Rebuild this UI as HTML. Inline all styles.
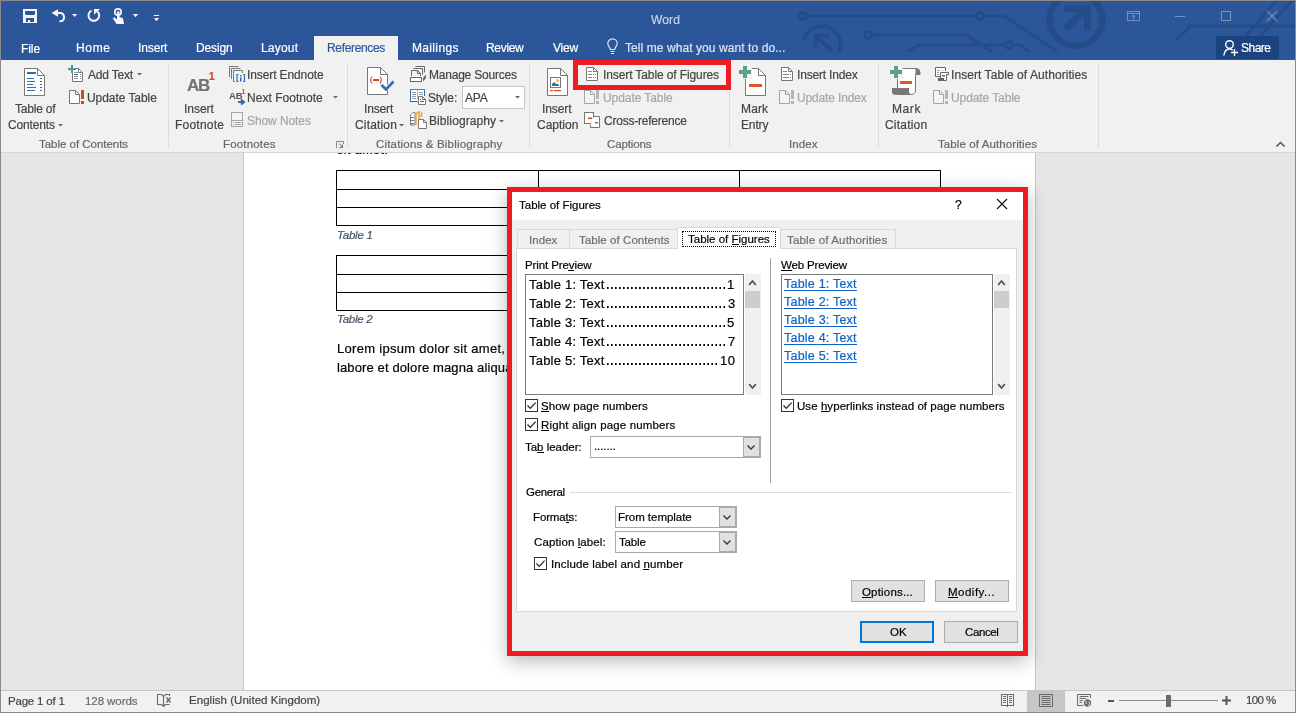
<!DOCTYPE html>
<html><head><meta charset="utf-8"><title>Word</title>
<style>
html,body{margin:0;padding:0;}
body{width:1296px;height:713px;position:relative;overflow:hidden;background:#f1f1f1;font-family:"Liberation Sans", sans-serif;}
.t{position:absolute;white-space:pre;will-change:transform;-webkit-text-stroke:0.2px currentColor;}
svg{overflow:visible}
</style></head><body>
<div style="position:absolute;left:0px;top:0px;width:1296px;height:713px;background:#8a8a8a;"></div>
<div style="position:absolute;left:1px;top:1px;width:1294px;height:59px;background:#2b579a;"></div>
<svg style="position:absolute;left:780px;top:1px;overflow:hidden" width="515" height="51" viewBox="0 0 515 51">
<g fill="none" stroke="#244c88" stroke-width="3" transform="translate(-780,-1)">
<circle cx="802.6" cy="16" r="3.5"/><path d="M806 16H977"/><circle cx="980" cy="16" r="3.5"/><path d="M983.5 16H1004L1058 52"/>
<circle cx="868.2" cy="35" r="3.5"/><path d="M872 35H967L994 53"/>
<path d="M905 53L919 45H1005"/><circle cx="1008.7" cy="45" r="3.5"/><path d="M1012 45H1020L1031 53"/>
<path d="M804 40.5A18.5 18.5 0 1 1 839 52" stroke-width="4"/>
<path d="M815.5 48V35.5H829" stroke-width="4"/><path d="M817 37L832 51" stroke-width="4"/>
<circle cx="1076" cy="19.5" r="26.4" stroke-width="6.8"/>
<path d="M1065 29L1086 9" stroke-width="7"/><path d="M1064 8.5H1087.5V30.5" stroke-width="6.8"/>
<path d="M1176 40L1191 26H1296"/>
<path d="M1245 37L1277 0M1260 37L1292 0"/>
</g></svg>
<svg style="position:absolute;left:1127px;top:11px;" width="13" height="10" viewBox="0 0 13 10"><g fill="none" stroke="#7890bb" stroke-width="1"><rect x="0.5" y="0.5" width="12" height="9"/><path d="M0.5 2.5H12.5M6.5 8.5V4M4.5 6L6.5 4L8.5 6"/></g></svg>
<svg style="position:absolute;left:1175px;top:15px;" width="10" height="2" viewBox="0 0 10 2"><path d="M0 1.5H10" stroke="#7890bb" stroke-width="1"/></svg>
<svg style="position:absolute;left:1221px;top:11px;" width="10" height="10" viewBox="0 0 10 10"><rect x="0.5" y="0.5" width="9" height="9" fill="none" stroke="#7890bb" stroke-width="1"/></svg>
<svg style="position:absolute;left:1267px;top:11px;" width="10" height="10" viewBox="0 0 10 10"><path d="M0 0L10 10M10 0L0 10" stroke="#7890bb" stroke-width="1.1"/></svg>
<div class="t" style="left:651.00px;top:14.00px;font-size:12px;line-height:12px;color:#c9d5e8;letter-spacing:0.133px;">Word</div>
<svg style="position:absolute;left:0px;top:0px;" width="200" height="30" viewBox="0 0 200 30">
<path d="M23 9H37V23H23Z" fill="#f5f5f5"/>
<path d="M25 11H35V14L34 15H26L25 14Z" fill="#2b579a"/><path d="M26 18H34V22H26Z" fill="#2b579a"/><path d="M28 20H30V22H28Z" fill="#f5f5f5"/>
<path d="M55 13H60.5A4.2 4.2 0 0 1 60.5 21.3H59.5" fill="none" stroke="#f5f5f5" stroke-width="2"/>
<path d="M51.5 13L58 9.2V16.8Z" fill="#f5f5f5"/>
<path d="M72 14H77.2L74.6 17Z" fill="#f5f5f5"/>
<path d="M91.5 10.6A5.4 5.4 0 1 0 97.5 11.5" fill="none" stroke="#f5f5f5" stroke-width="2"/>
<path d="M94 9H100L94 14.8Z" fill="#f5f5f5"/>
<circle cx="118" cy="12" r="3.2" fill="none" stroke="#f5f5f5" stroke-width="1.7"/>
<path d="M117 19.5V12.5A1.25 1.25 0 0 1 119.5 12.5V17L123 18.2L124 24H116.5L112.8 18.3L114.3 17.3L117 19.5Z" fill="#f5f5f5"/>
<path d="M132.9 14H138.2L135.55 17.2Z" fill="#f5f5f5"/>
<path d="M153.9 15H159.1V16H153.9Z" fill="#f5f5f5"/><path d="M153.9 18H159.1L156.5 21.2Z" fill="#f5f5f5"/>
</svg>
<div class="t" style="left:20.70px;top:43.00px;font-size:12px;line-height:12px;color:#ffffff;letter-spacing:-0.067px;">File</div>
<div class="t" style="left:76.10px;top:42.00px;font-size:12px;line-height:12px;color:#ffffff;letter-spacing:0.667px;">Home</div>
<div class="t" style="left:137.90px;top:42.00px;font-size:12px;line-height:12px;color:#ffffff;letter-spacing:-0.120px;">Insert</div>
<div class="t" style="left:196.00px;top:42.00px;font-size:12px;line-height:12px;color:#ffffff;letter-spacing:-0.120px;">Design</div>
<div class="t" style="left:261.30px;top:42.00px;font-size:12px;line-height:12px;color:#ffffff;letter-spacing:0.200px;">Layout</div>
<div style="position:absolute;left:314px;top:36px;width:84px;height:24px;background:#f1f1f1;"></div>
<div class="t" style="left:326.50px;top:42.00px;font-size:12px;line-height:12px;color:#2b579a;letter-spacing:-0.333px;">References</div>
<div class="t" style="left:412.30px;top:42.00px;font-size:12px;line-height:12px;color:#ffffff;letter-spacing:0.343px;">Mailings</div>
<div class="t" style="left:486.30px;top:42.00px;font-size:12px;line-height:12px;color:#ffffff;letter-spacing:-0.320px;">Review</div>
<div class="t" style="left:552.80px;top:42.00px;font-size:12px;line-height:12px;color:#ffffff;letter-spacing:-0.200px;">View</div>
<svg style="position:absolute;left:607px;top:39px;" width="11" height="15" viewBox="0 0 11 15"><g fill="none" stroke="#dfe6f1" stroke-width="1.2"><path d="M3.3 10.5C3 8 0.8 7 0.8 4.6A4.7 4.7 0 0 1 10.2 4.6C10.2 7 8 8 7.7 10.5Z"/><path d="M3.5 12.5H7.5M4 14.5H7"/></g></svg>
<div class="t" style="left:624.70px;top:42.00px;font-size:12px;line-height:12px;color:#dde4ef;letter-spacing:0.076px;">Tell me what you want to do...</div>
<div style="position:absolute;left:1216px;top:36px;width:63px;height:23px;background:#1a437f;"></div>
<svg style="position:absolute;left:1223px;top:40px;" width="15" height="16" viewBox="0 0 15 16"><g fill="none" stroke="#ffffff" stroke-width="1.4"><circle cx="6.5" cy="4.5" r="3.8"/><path d="M0.8 15.5C1.5 11 3.5 9 6.5 9C8 9 9 9.5 9.8 10"/><path d="M11.5 9V16M8 12.5H15" stroke="#1a437f" stroke-width="3"/><path d="M11.5 9V16M8 12.5H15" stroke-width="1.3"/></g></svg>
<div class="t" style="left:1241.00px;top:42.00px;font-size:12px;line-height:12px;color:#ffffff;letter-spacing:-0.500px;">Share</div>
<div style="position:absolute;left:1px;top:60px;width:1294px;height:92px;background:#f1f1f1;"></div>
<div style="position:absolute;left:1px;top:152px;width:1294px;height:1px;background:#d6d6d6;"></div>
<div style="position:absolute;left:168px;top:64px;width:1px;height:84px;background:#dcdcdc;"></div>
<div style="position:absolute;left:347px;top:64px;width:1px;height:84px;background:#dcdcdc;"></div>
<div style="position:absolute;left:529px;top:64px;width:1px;height:84px;background:#dcdcdc;"></div>
<div style="position:absolute;left:729px;top:64px;width:1px;height:84px;background:#dcdcdc;"></div>
<div style="position:absolute;left:878px;top:64px;width:1px;height:84px;background:#dcdcdc;"></div>
<div style="position:absolute;left:1098px;top:64px;width:1px;height:84px;background:#dcdcdc;"></div>
<div class="t" style="left:14.70px;top:103.00px;font-size:12px;line-height:12px;color:#444444;letter-spacing:-0.200px;">Table of</div>
<div class="t" style="left:7.60px;top:119.00px;font-size:12px;line-height:12px;color:#444444;letter-spacing:-0.143px;">Contents</div>
<div class="t" style="left:39.30px;top:139.00px;font-size:11.5px;line-height:11.5px;color:#666666;letter-spacing:-0.025px;">Table of Contents</div>
<div class="t" style="left:88.30px;top:69.00px;font-size:12px;line-height:12px;color:#444444;letter-spacing:-0.200px;">Add Text</div>
<div class="t" style="left:87.30px;top:92.00px;font-size:12px;line-height:12px;color:#444444;letter-spacing:-0.055px;">Update Table</div>
<div class="t" style="left:186.70px;top:77.00px;font-size:17px;line-height:17px;font-weight:bold;color:#737373;letter-spacing:-1.400px;">AB</div>
<div class="t" style="left:208.70px;top:72.00px;font-size:10px;line-height:10px;font-weight:bold;color:#d24726;">1</div>
<div class="t" style="left:184.20px;top:103.00px;font-size:12px;line-height:12px;color:#444444;letter-spacing:-0.040px;">Insert</div>
<div class="t" style="left:174.60px;top:119.00px;font-size:12px;line-height:12px;color:#444444;letter-spacing:0.229px;">Footnote</div>
<div class="t" style="left:247.30px;top:69.00px;font-size:12px;line-height:12px;color:#444444;letter-spacing:-0.108px;">Insert Endnote</div>
<div class="t" style="left:247.30px;top:92.00px;font-size:12px;line-height:12px;color:#444444;letter-spacing:0.033px;">Next Footnote</div>
<div class="t" style="left:247.30px;top:115.00px;font-size:12px;line-height:12px;color:#a6a6a6;letter-spacing:-0.089px;">Show Notes</div>
<div class="t" style="left:222.60px;top:139.00px;font-size:11.5px;line-height:11.5px;color:#666666;letter-spacing:0.175px;">Footnotes</div>
<div class="t" style="left:364.20px;top:103.00px;font-size:12px;line-height:12px;color:#444444;letter-spacing:-0.160px;">Insert</div>
<div class="t" style="left:354.50px;top:119.00px;font-size:12px;line-height:12px;color:#444444;letter-spacing:0.171px;">Citation</div>
<div class="t" style="left:428.70px;top:69.00px;font-size:12px;line-height:12px;color:#444444;letter-spacing:-0.215px;">Manage Sources</div>
<div class="t" style="left:428.30px;top:92.00px;font-size:12px;line-height:12px;color:#444444;letter-spacing:-0.160px;">Style:</div>
<div style="position:absolute;left:462px;top:86px;width:63px;height:23px;background:#c6c6c6;"></div>
<div style="position:absolute;left:463px;top:87px;width:61px;height:21px;background:#ffffff;"></div>
<div class="t" style="left:465.20px;top:92.00px;font-size:12px;line-height:12px;color:#444444;letter-spacing:-0.200px;">APA</div>
<div class="t" style="left:428.70px;top:115.00px;font-size:12px;line-height:12px;color:#444444;letter-spacing:0.091px;">Bibliography</div>
<div class="t" style="left:375.80px;top:139.00px;font-size:11.5px;line-height:11.5px;color:#666666;letter-spacing:0.183px;">Citations &amp; Bibliography</div>
<div class="t" style="left:542.20px;top:103.00px;font-size:12px;line-height:12px;color:#444444;letter-spacing:-0.080px;">Insert</div>
<div class="t" style="left:536.60px;top:119.00px;font-size:12px;line-height:12px;color:#444444;">Caption</div>
<div style="position:absolute;left:573px;top:60px;width:158px;height:30px;background:#ed1c24;"></div>
<div style="position:absolute;left:578px;top:65px;width:148px;height:20px;background:#f1f1f1;"></div>
<div class="t" style="left:602.60px;top:69.00px;font-size:12px;line-height:12px;color:#444444;letter-spacing:-0.109px;">Insert Table of Figures</div>
<div class="t" style="left:602.60px;top:92.00px;font-size:12px;line-height:12px;color:#a6a6a6;letter-spacing:-0.073px;">Update Table</div>
<div class="t" style="left:603.60px;top:115.00px;font-size:12px;line-height:12px;color:#444444;letter-spacing:-0.229px;">Cross-reference</div>
<div class="t" style="left:606.80px;top:139.00px;font-size:11.5px;line-height:11.5px;color:#666666;letter-spacing:-0.114px;">Captions</div>
<div class="t" style="left:740.70px;top:103.00px;font-size:12px;line-height:12px;color:#444444;letter-spacing:0.133px;">Mark</div>
<div class="t" style="left:740.70px;top:119.00px;font-size:12px;line-height:12px;color:#444444;letter-spacing:-0.150px;">Entry</div>
<div class="t" style="left:797.30px;top:69.00px;font-size:12px;line-height:12px;color:#444444;letter-spacing:-0.182px;">Insert Index</div>
<div class="t" style="left:797.30px;top:92.00px;font-size:12px;line-height:12px;color:#a6a6a6;letter-spacing:-0.145px;">Update Index</div>
<div class="t" style="left:789.30px;top:139.00px;font-size:11.5px;line-height:11.5px;color:#666666;letter-spacing:0.100px;">Index</div>
<div class="t" style="left:892.20px;top:103.00px;font-size:12px;line-height:12px;color:#444444;letter-spacing:0.600px;">Mark</div>
<div class="t" style="left:885.40px;top:119.00px;font-size:12px;line-height:12px;color:#444444;letter-spacing:0.200px;">Citation</div>
<div class="t" style="left:951.30px;top:69.00px;font-size:12px;line-height:12px;color:#444444;letter-spacing:0.069px;">Insert Table of Authorities</div>
<div class="t" style="left:951.30px;top:92.00px;font-size:12px;line-height:12px;color:#a6a6a6;letter-spacing:-0.091px;">Update Table</div>
<div class="t" style="left:938.40px;top:139.00px;font-size:11.5px;line-height:11.5px;color:#666666;letter-spacing:0.095px;">Table of Authorities</div>
<svg style="position:absolute;left:1276px;top:141px;" width="9" height="6" viewBox="0 0 9 6"><path d="M0.5 5.5L4.5 1.5L8.5 5.5" fill="none" stroke="#555" stroke-width="1.5"/></svg>
<div style="position:absolute;left:1px;top:153px;width:1294px;height:537px;background:#e6e6e6;"></div>
<div style="position:absolute;left:243px;top:153px;width:793px;height:537px;background:#c6c6c6;"></div>
<div style="position:absolute;left:244px;top:153px;width:791px;height:537px;background:#ffffff;"></div>
<div style="position:absolute;left:244px;top:153px;width:791px;height:10px;overflow:hidden"><div class="t" style="left:92.5px;top:-9px;font-size:12.5px;line-height:12.5px;color:#000;letter-spacing:0.45px">sit amet.</div></div>
<div style="position:absolute;left:336px;top:170px;width:605px;height:56px;background:#000;"></div>
<div style="position:absolute;left:337px;top:171px;width:201px;height:18px;background:#fff;"></div>
<div style="position:absolute;left:539px;top:171px;width:200px;height:18px;background:#fff;"></div>
<div style="position:absolute;left:740px;top:171px;width:200px;height:18px;background:#fff;"></div>
<div style="position:absolute;left:337px;top:190px;width:201px;height:17px;background:#fff;"></div>
<div style="position:absolute;left:539px;top:190px;width:200px;height:17px;background:#fff;"></div>
<div style="position:absolute;left:740px;top:190px;width:200px;height:17px;background:#fff;"></div>
<div style="position:absolute;left:337px;top:208px;width:201px;height:17px;background:#fff;"></div>
<div style="position:absolute;left:539px;top:208px;width:200px;height:17px;background:#fff;"></div>
<div style="position:absolute;left:740px;top:208px;width:200px;height:17px;background:#fff;"></div>
<div class="t" style="left:336.90px;top:230.00px;font-size:11.5px;line-height:11.5px;font-style:italic;color:#44546a;letter-spacing:-0.233px;">Table 1</div>
<div style="position:absolute;left:336px;top:255px;width:605px;height:56px;background:#000;"></div>
<div style="position:absolute;left:337px;top:256px;width:201px;height:18px;background:#fff;"></div>
<div style="position:absolute;left:539px;top:256px;width:200px;height:18px;background:#fff;"></div>
<div style="position:absolute;left:740px;top:256px;width:200px;height:18px;background:#fff;"></div>
<div style="position:absolute;left:337px;top:275px;width:201px;height:17px;background:#fff;"></div>
<div style="position:absolute;left:539px;top:275px;width:200px;height:17px;background:#fff;"></div>
<div style="position:absolute;left:740px;top:275px;width:200px;height:17px;background:#fff;"></div>
<div style="position:absolute;left:337px;top:293px;width:201px;height:17px;background:#fff;"></div>
<div style="position:absolute;left:539px;top:293px;width:200px;height:17px;background:#fff;"></div>
<div style="position:absolute;left:740px;top:293px;width:200px;height:17px;background:#fff;"></div>
<div class="t" style="left:336.80px;top:314.00px;font-size:11.5px;line-height:11.5px;font-style:italic;color:#44546a;letter-spacing:-0.267px;">Table 2</div>
<div class="t" style="left:336.70px;top:342.00px;font-size:13px;line-height:13px;color:#000;letter-spacing:0.290px;">Lorem ipsum dolor sit amet, consectetur adipiscing elit, sed do eiusmod tempor</div>
<div class="t" style="left:336.70px;top:361.00px;font-size:13px;line-height:13px;color:#000;letter-spacing:0.120px;">labore et dolore magna aliqua. Ut enim ad minim veniam, quis nostrud</div>
<div style="position:absolute;left:1px;top:690px;width:1294px;height:1px;background:#c6c6c6;"></div>
<div style="position:absolute;left:1px;top:691px;width:1294px;height:21px;background:#f1f1f1;"></div>
<div class="t" style="left:7.50px;top:696.00px;font-size:11.5px;line-height:11.5px;color:#444444;letter-spacing:-0.200px;">Page 1 of 1</div>
<div class="t" style="left:84.60px;top:696.00px;font-size:11.5px;line-height:11.5px;color:#6a6a6a;letter-spacing:-0.075px;">128 words</div>
<div class="t" style="left:188.60px;top:695.00px;font-size:11.5px;line-height:11.5px;color:#444444;letter-spacing:0.035px;">English (United Kingdom)</div>
<div style="position:absolute;left:1027px;top:691px;width:38px;height:21px;background:#c6c6c6;"></div>
<div class="t" style="left:1245.90px;top:695.00px;font-size:11.5px;line-height:11.5px;color:#444444;letter-spacing:-0.600px;">100 %</div>
<div style="position:absolute;left:1119px;top:700px;width:99px;height:1px;background:#8f8f8f;"></div>
<div style="position:absolute;left:1166px;top:695px;width:5px;height:12px;background:#6b6b6b;"></div>
<div style="position:absolute;left:1108px;top:700px;width:6px;height:2px;background:#555;"></div>
<svg style="position:absolute;left:1222px;top:696px;" width="9" height="9" viewBox="0 0 9 9"><path d="M4.5 0V9M0 4.5H9" stroke="#555" stroke-width="2"/></svg>
<div style="position:absolute;left:507px;top:187px;width:521px;height:469px;box-shadow:0 5px 18px rgba(0,0,0,0.28)"></div>
<div style="position:absolute;left:507px;top:187px;width:521px;height:469px;background:#ed1c24;"></div>
<div style="position:absolute;left:512px;top:192px;width:511px;height:459px;background:#f0f0f0;"></div>
<div style="position:absolute;left:512px;top:192px;width:511px;height:28px;background:#ffffff;"></div>
<div class="t" style="left:518.90px;top:200.00px;font-size:11.5px;line-height:11.5px;color:#000;">Table of Figures</div>
<div class="t" style="left:954.70px;top:199.00px;font-size:12px;line-height:12px;color:#000;">?</div>
<svg style="position:absolute;left:997px;top:199px;" width="10" height="10" viewBox="0 0 10 10"><path d="M0 0L10 10M10 0L0 10" stroke="#111" stroke-width="1.1"/></svg>
<div style="position:absolute;left:517px;top:229px;width:52px;height:20px;background:#d9d9d9;"></div>
<div style="position:absolute;left:518px;top:230px;width:51px;height:19px;background:#f0f0f0;"></div>
<div style="position:absolute;left:569px;top:229px;width:109px;height:20px;background:#d9d9d9;"></div>
<div style="position:absolute;left:570px;top:230px;width:107px;height:19px;background:#f0f0f0;"></div>
<div style="position:absolute;left:780px;top:229px;width:116px;height:20px;background:#d9d9d9;"></div>
<div style="position:absolute;left:781px;top:230px;width:114px;height:19px;background:#f0f0f0;"></div>
<div style="position:absolute;left:516px;top:248px;width:501px;height:364px;background:#d9d9d9;"></div>
<div style="position:absolute;left:517px;top:249px;width:499px;height:362px;background:#ffffff;"></div>
<div style="position:absolute;left:677px;top:227px;width:104px;height:22px;background:#d9d9d9;"></div>
<div style="position:absolute;left:678px;top:228px;width:102px;height:22px;background:#ffffff;"></div>
<div style="position:absolute;left:682px;top:231px;width:92px;height:14px;border:1px dotted #000"></div>
<div class="t" style="left:529.20px;top:235.00px;font-size:11.5px;line-height:11.5px;color:#6d6d6d;letter-spacing:0.050px;">Index</div>
<div class="t" style="left:578.80px;top:235.00px;font-size:11.5px;line-height:11.5px;color:#6d6d6d;letter-spacing:0.062px;">Table of Contents</div>
<div class="t" style="left:688.10px;top:234.00px;font-size:11.5px;line-height:11.5px;color:#000;">Table of Figures</div>
<div style="position:absolute;left:731.6px;top:244px;width:7.0px;height:1px;background:#000"></div>
<div class="t" style="left:787.00px;top:235.00px;font-size:11.5px;line-height:11.5px;color:#6d6d6d;letter-spacing:0.158px;">Table of Authorities</div>
<div class="t" style="left:524.50px;top:260.00px;font-size:11.5px;line-height:11.5px;color:#000;letter-spacing:-0.100px;">Print Preview</div>
<div style="position:absolute;left:568.3px;top:270px;width:5.7px;height:1px;background:#000"></div>
<div style="position:absolute;left:525px;top:274px;width:219px;height:121px;background:#7a7a7a;"></div>
<div style="position:absolute;left:526px;top:275px;width:217px;height:119px;background:#ffffff;"></div>
<div style="position:absolute;left:745px;top:274px;width:16px;height:121px;background:#f0f0f0;"></div>
<div style="position:absolute;left:745px;top:291px;width:15px;height:17px;background:#cdcdcd;"></div>
<svg style="position:absolute;left:748px;top:279px;" width="9" height="7" viewBox="0 0 9 7"><path d="M1.2 5.8L4.5 2L7.8 5.8" fill="none" stroke="#555" stroke-width="1.8"/></svg>
<svg style="position:absolute;left:748px;top:383px;" width="9" height="7" viewBox="0 0 9 7"><path d="M1.2 1.2L4.5 5L7.8 1.2" fill="none" stroke="#555" stroke-width="1.8"/></svg>
<div class="t" style="left:528.80px;top:278.00px;font-size:13px;line-height:13px;color:#000;letter-spacing:0.217px;">Table 1: Text</div>
<div class="t" style="left:726.80px;top:278.00px;font-size:13px;line-height:13px;color:#000;">1</div>
<div style="position:absolute;left:607px;top:287px;width:118px;height:2px;background-image:linear-gradient(90deg,#000 0 2px,transparent 2px);background-size:4.03px 2px"></div>
<div class="t" style="left:528.80px;top:297.00px;font-size:13px;line-height:13px;color:#000;letter-spacing:0.217px;">Table 2: Text</div>
<div class="t" style="left:727.80px;top:297.00px;font-size:13px;line-height:13px;color:#000;">3</div>
<div style="position:absolute;left:607px;top:306px;width:118px;height:2px;background-image:linear-gradient(90deg,#000 0 2px,transparent 2px);background-size:4.03px 2px"></div>
<div class="t" style="left:528.80px;top:316.00px;font-size:13px;line-height:13px;color:#000;letter-spacing:0.217px;">Table 3: Text</div>
<div class="t" style="left:726.80px;top:316.00px;font-size:13px;line-height:13px;color:#000;">5</div>
<div style="position:absolute;left:607px;top:325px;width:118px;height:2px;background-image:linear-gradient(90deg,#000 0 2px,transparent 2px);background-size:4.03px 2px"></div>
<div class="t" style="left:528.80px;top:335.00px;font-size:13px;line-height:13px;color:#000;letter-spacing:0.217px;">Table 4: Text</div>
<div class="t" style="left:727.80px;top:335.00px;font-size:13px;line-height:13px;color:#000;">7</div>
<div style="position:absolute;left:607px;top:344px;width:118px;height:2px;background-image:linear-gradient(90deg,#000 0 2px,transparent 2px);background-size:4.03px 2px"></div>
<div class="t" style="left:528.80px;top:354.00px;font-size:13px;line-height:13px;color:#000;letter-spacing:0.217px;">Table 5: Text</div>
<div class="t" style="left:719.70px;top:354.00px;font-size:13px;line-height:13px;color:#000;letter-spacing:0.600px;">10</div>
<div style="position:absolute;left:607px;top:363px;width:110px;height:2px;background-image:linear-gradient(90deg,#000 0 2px,transparent 2px);background-size:4.03px 2px"></div>
<div style="position:absolute;left:770px;top:258px;width:1px;height:225px;background:#a0a0a0;"></div>
<div class="t" style="left:781.00px;top:260.00px;font-size:11.5px;line-height:11.5px;color:#000;letter-spacing:-0.160px;">Web Preview</div>
<div style="position:absolute;left:781.0px;top:270px;width:10.5px;height:1px;background:#000"></div>
<div style="position:absolute;left:781px;top:274px;width:212px;height:121px;background:#7a7a7a;"></div>
<div style="position:absolute;left:782px;top:275px;width:210px;height:119px;background:#ffffff;"></div>
<div style="position:absolute;left:994px;top:274px;width:16px;height:121px;background:#f0f0f0;"></div>
<div style="position:absolute;left:994px;top:291px;width:15px;height:17px;background:#cdcdcd;"></div>
<svg style="position:absolute;left:997px;top:279px;" width="9" height="7" viewBox="0 0 9 7"><path d="M1.2 5.8L4.5 2L7.8 5.8" fill="none" stroke="#555" stroke-width="1.8"/></svg>
<svg style="position:absolute;left:997px;top:383px;" width="9" height="7" viewBox="0 0 9 7"><path d="M1.2 1.2L4.5 5L7.8 1.2" fill="none" stroke="#555" stroke-width="1.8"/></svg>
<div class="t" style="left:784.00px;top:278.00px;font-size:12.5px;line-height:12.5px;color:#0f62c0;letter-spacing:0.217px;">Table 1: Text</div>
<div style="position:absolute;left:784px;top:290px;width:73px;height:1px;background:#0f62c0;"></div>
<div class="t" style="left:784.00px;top:296.00px;font-size:12.5px;line-height:12.5px;color:#0f62c0;letter-spacing:0.217px;">Table 2: Text</div>
<div style="position:absolute;left:784px;top:308px;width:73px;height:1px;background:#0f62c0;"></div>
<div class="t" style="left:784.00px;top:314.00px;font-size:12.5px;line-height:12.5px;color:#0f62c0;letter-spacing:0.217px;">Table 3: Text</div>
<div style="position:absolute;left:784px;top:326px;width:73px;height:1px;background:#0f62c0;"></div>
<div class="t" style="left:784.00px;top:332.00px;font-size:12.5px;line-height:12.5px;color:#0f62c0;letter-spacing:0.217px;">Table 4: Text</div>
<div style="position:absolute;left:784px;top:344px;width:73px;height:1px;background:#0f62c0;"></div>
<div class="t" style="left:784.00px;top:350.00px;font-size:12.5px;line-height:12.5px;color:#0f62c0;letter-spacing:0.217px;">Table 5: Text</div>
<div style="position:absolute;left:784px;top:362px;width:73px;height:1px;background:#0f62c0;"></div>
<div style="position:absolute;left:525px;top:399px;width:13px;height:13px;background:#333333;"></div>
<div style="position:absolute;left:526px;top:400px;width:11px;height:11px;background:#ffffff;"></div>
<svg style="position:absolute;left:527px;top:402px;" width="9" height="7" viewBox="0 0 9 7"><path d="M0.5 3.5L3.3 6.3L8.6 0.7" fill="none" stroke="#222" stroke-width="1.2"/></svg>
<div class="t" style="left:541.10px;top:401.00px;font-size:11.5px;line-height:11.5px;color:#000;letter-spacing:0.075px;">Show page numbers</div>
<div style="position:absolute;left:541.1px;top:411px;width:7.7px;height:1px;background:#000"></div>
<div style="position:absolute;left:525px;top:418px;width:13px;height:13px;background:#333333;"></div>
<div style="position:absolute;left:526px;top:419px;width:11px;height:11px;background:#ffffff;"></div>
<svg style="position:absolute;left:527px;top:421px;" width="9" height="7" viewBox="0 0 9 7"><path d="M0.5 3.5L3.3 6.3L8.6 0.7" fill="none" stroke="#222" stroke-width="1.2"/></svg>
<div class="t" style="left:541.10px;top:420.00px;font-size:11.5px;line-height:11.5px;color:#000;letter-spacing:0.139px;">Right align page numbers</div>
<div style="position:absolute;left:541.1px;top:430px;width:8.3px;height:1px;background:#000"></div>
<div style="position:absolute;left:781px;top:399px;width:13px;height:13px;background:#333333;"></div>
<div style="position:absolute;left:782px;top:400px;width:11px;height:11px;background:#ffffff;"></div>
<svg style="position:absolute;left:783px;top:402px;" width="9" height="7" viewBox="0 0 9 7"><path d="M0.5 3.5L3.3 6.3L8.6 0.7" fill="none" stroke="#222" stroke-width="1.2"/></svg>
<div class="t" style="left:797.40px;top:401.00px;font-size:11.5px;line-height:11.5px;color:#000;letter-spacing:0.065px;">Use hyperlinks instead of page numbers</div>
<div style="position:absolute;left:821.3px;top:411px;width:6.4px;height:1px;background:#000"></div>
<div class="t" style="left:525.30px;top:442.00px;font-size:11.5px;line-height:11.5px;color:#000;letter-spacing:-0.020px;">Tab leader:</div>
<div style="position:absolute;left:537.4px;top:452px;width:6.4px;height:1px;background:#000"></div>
<div style="position:absolute;left:590px;top:436px;width:171px;height:22px;background:#a8a8ae;"></div>
<div style="position:absolute;left:591px;top:437px;width:169px;height:20px;background:#ffffff;"></div>
<div style="position:absolute;left:743px;top:437px;width:17px;height:20px;background:#a8a8ae;"></div>
<div style="position:absolute;left:744px;top:438px;width:15px;height:18px;background:#e1e1e1;"></div>
<svg style="position:absolute;left:747px;top:445px;" width="8" height="5" viewBox="0 0 8 5"><path d="M0.5 0.5L4 4L7.5 0.5" fill="none" stroke="#333" stroke-width="1.3"/></svg>
<div class="t" style="left:593.80px;top:441.00px;font-size:11.5px;line-height:11.5px;color:#000;letter-spacing:-0.100px;">.......</div>
<div class="t" style="left:525.70px;top:487.00px;font-size:11.5px;line-height:11.5px;color:#000;letter-spacing:-0.300px;">General</div>
<div style="position:absolute;left:570px;top:492px;width:441px;height:1px;background:#dcdcdc;"></div>
<div class="t" style="left:533.40px;top:512.00px;font-size:11.5px;line-height:11.5px;color:#000;letter-spacing:-0.143px;">Formats:</div>
<div style="position:absolute;left:565.9px;top:522px;width:3.1px;height:1px;background:#000"></div>
<div style="position:absolute;left:615px;top:506px;width:122px;height:22px;background:#a8a8ae;"></div>
<div style="position:absolute;left:616px;top:507px;width:120px;height:20px;background:#ffffff;"></div>
<div style="position:absolute;left:719px;top:507px;width:17px;height:20px;background:#a8a8ae;"></div>
<div style="position:absolute;left:720px;top:508px;width:15px;height:18px;background:#e1e1e1;"></div>
<svg style="position:absolute;left:723px;top:515px;" width="8" height="5" viewBox="0 0 8 5"><path d="M0.5 0.5L4 4L7.5 0.5" fill="none" stroke="#333" stroke-width="1.3"/></svg>
<div class="t" style="left:618.40px;top:512.00px;font-size:11.5px;line-height:11.5px;color:#000;letter-spacing:-0.033px;">From template</div>
<div class="t" style="left:534.40px;top:537.00px;font-size:11.5px;line-height:11.5px;color:#000;letter-spacing:0.108px;">Caption label:</div>
<div style="position:absolute;left:578.1px;top:547px;width:3.0px;height:1px;background:#000"></div>
<div style="position:absolute;left:615px;top:531px;width:122px;height:22px;background:#a8a8ae;"></div>
<div style="position:absolute;left:616px;top:532px;width:120px;height:20px;background:#ffffff;"></div>
<div style="position:absolute;left:719px;top:532px;width:17px;height:20px;background:#a8a8ae;"></div>
<div style="position:absolute;left:720px;top:533px;width:15px;height:18px;background:#e1e1e1;"></div>
<svg style="position:absolute;left:723px;top:540px;" width="8" height="5" viewBox="0 0 8 5"><path d="M0.5 0.5L4 4L7.5 0.5" fill="none" stroke="#333" stroke-width="1.3"/></svg>
<div class="t" style="left:619.40px;top:537.00px;font-size:11.5px;line-height:11.5px;color:#000;letter-spacing:-0.150px;">Table</div>
<div style="position:absolute;left:534px;top:557px;width:13px;height:13px;background:#333333;"></div>
<div style="position:absolute;left:535px;top:558px;width:11px;height:11px;background:#ffffff;"></div>
<svg style="position:absolute;left:536px;top:560px;" width="9" height="7" viewBox="0 0 9 7"><path d="M0.5 3.5L3.3 6.3L8.6 0.7" fill="none" stroke="#222" stroke-width="1.2"/></svg>
<div class="t" style="left:550.50px;top:559.00px;font-size:11.5px;line-height:11.5px;color:#000;letter-spacing:0.130px;">Include label and number</div>
<div style="position:absolute;left:643.0px;top:569px;width:6.4px;height:1px;background:#000"></div>
<div style="position:absolute;left:851px;top:580px;width:74px;height:22px;background:#adadad;"></div>
<div style="position:absolute;left:852px;top:581px;width:72px;height:20px;background:#e1e1e1;"></div>
<div class="t" style="left:862.30px;top:587.00px;font-size:11.5px;line-height:11.5px;color:#000;letter-spacing:0.178px;">Options...</div>
<div style="position:absolute;left:862.3px;top:597px;width:8.9px;height:1px;background:#000"></div>
<div style="position:absolute;left:935px;top:580px;width:74px;height:22px;background:#adadad;"></div>
<div style="position:absolute;left:936px;top:581px;width:72px;height:20px;background:#e1e1e1;"></div>
<div class="t" style="left:948.20px;top:587.00px;font-size:11.5px;line-height:11.5px;color:#000;letter-spacing:0.500px;">Modify...</div>
<div style="position:absolute;left:948.2px;top:597px;width:9.6px;height:1px;background:#000"></div>
<div style="position:absolute;left:860px;top:621px;width:74px;height:22px;background:#0078d7;"></div>
<div style="position:absolute;left:862px;top:623px;width:70px;height:18px;background:#e1e1e1;"></div>
<div class="t" style="left:889.60px;top:627.00px;font-size:11.5px;line-height:11.5px;color:#000;">OK</div>
<div style="position:absolute;left:944px;top:621px;width:74px;height:22px;background:#adadad;"></div>
<div style="position:absolute;left:945px;top:622px;width:72px;height:20px;background:#e1e1e1;"></div>
<div class="t" style="left:964.60px;top:627.00px;font-size:11.5px;line-height:11.5px;color:#000;letter-spacing:-0.400px;">Cancel</div>
<svg style="position:absolute;left:0px;top:0px;" width="1296" height="160" viewBox="0 0 1296 160"><path d="M24.5 68.5H37.5L44.5 75.5V95.5H24.5Z" fill="#fff" stroke="#767676"/><path d="M37.5 68.5V75.5H44.5" fill="none" stroke="#767676"/><rect x="27" y="72" width="9" height="2" fill="#2e6db4"/><rect x="27" y="78" width="7" height="1" fill="#2e6db4"/><rect x="40" y="78" width="2" height="1" fill="#2e6db4"/><rect x="27" y="81" width="8" height="1" fill="#2e6db4"/><rect x="40" y="81" width="2" height="1" fill="#2e6db4"/><rect x="27" y="84" width="6" height="1" fill="#2e6db4"/><rect x="40" y="84" width="2" height="1" fill="#2e6db4"/><rect x="27" y="87" width="9" height="1" fill="#2e6db4"/><rect x="40" y="87" width="2" height="1" fill="#2e6db4"/><rect x="27" y="90" width="8" height="1" fill="#2e6db4"/><rect x="40" y="90" width="2" height="1" fill="#2e6db4"/><path d="M72.5 68.5H78.5L82.5 72.5V81.5H72.5Z" fill="#fff" stroke="#767676"/><path d="M78.5 68.5V72.5H82.5" fill="none" stroke="#767676"/><rect x="74" y="72" width="4" height="1" fill="#999"/><rect x="74" y="74" width="4" height="1" fill="#2e6db4"/><rect x="80" y="74" width="1" height="1" fill="#2e6db4"/><rect x="74" y="76" width="4" height="1" fill="#999"/><rect x="80" y="76" width="1" height="1" fill="#999"/><rect x="74" y="78" width="4" height="1" fill="#999"/><rect x="80" y="78" width="1" height="1" fill="#999"/><rect x="68" y="66" width="7" height="6" fill="#f1f1f1"/><rect x="71" y="65" width="2" height="8" fill="#4f9c82"/><rect x="68" y="68" width="8" height="2" fill="#4f9c82"/><path d="M69.5 90.5H75.5L79.5 94.5V103.5H69.5Z" fill="#fff" stroke="#767676"/><path d="M75.5 90.5V94.5H79.5" fill="none" stroke="#767676"/><rect x="81" y="90" width="3" height="9" fill="#d24726"/><rect x="81" y="101" width="3" height="3" fill="#d24726"/><path d="M229.5 77V66.5H238.5M231.5 79V68.5H240.5M235 81.5H233.5V70.5H242.5V73" fill="none" stroke="#767676"/><path d="M238.5 74.5H237V81.5H238.5M243 74.5H244.5V81.5H243" fill="none" stroke="#2e6db4" stroke-width="1.2"/><rect x="240" y="75" width="1.5" height="1.5" fill="#2e6db4"/><rect x="240" y="77.5" width="1.5" height="4" fill="#2e6db4"/><text x="229" y="99" font-family="Liberation Sans" font-weight="bold" font-size="9.5" fill="#555">AB</text><text x="241.5" y="94" font-family="Liberation Sans" font-weight="bold" font-size="7" fill="#d24726">1</text><path d="M238 102H243.5M241 99.5L244 102L241 104.5" fill="none" stroke="#2e6db4" stroke-width="2"/><rect x="231.5" y="112.5" width="11" height="14" fill="#f6f2f6" stroke="#a6a6a6"/><path d="M231.5 120.5H242.5" stroke="#a6a6a6"/><rect x="233" y="122" width="1" height="1" fill="#a6a6a6"/><rect x="233" y="124" width="1" height="1" fill="#a6a6a6"/><rect x="235" y="122" width="6" height="1" fill="#a6a6a6"/><rect x="235" y="124" width="6" height="1" fill="#a6a6a6"/><path d="M367.5 67.5H380.5L387.5 74.5V94.5H367.5Z" fill="#fff" stroke="#767676"/><path d="M380.5 67.5V74.5H387.5" fill="none" stroke="#767676"/><path d="M372 76.5Q369.5 80 372 83.5M380 76.5Q382.5 80 380 83.5" fill="none" stroke="#d24726" stroke-width="1.1"/><rect x="373" y="79" width="6" height="2" fill="#d24726"/><path d="M381 84L386 89L395 80" fill="none" stroke="#f1f1f1" stroke-width="4"/><path d="M381.5 85L386 89.5L393.5 81.5" fill="none" stroke="#2e6db4" stroke-width="2.6"/><path d="M415.5 66.5H424.5V72.5M413.5 68.5H422.5V74.5M411.5 76V70.5H417.5L420.5 73.5V76" fill="none" stroke="#666"/><path d="M417.5 70.5V73.5H420.5" fill="none" stroke="#666"/><rect x="410.5" y="77.5" width="11" height="4" fill="#fff" stroke="#666"/><path d="M423 81.5L426 78V74.5L423 78Z" fill="#666"/><rect x="410" y="89" width="15" height="13" fill="#fff"/><path d="M410.5 102V89.5H424.5V96M410.5 101.5H417.5" fill="none" stroke="#2e6db4"/><path d="M410.5 89.5H424.5" stroke="#777"/><path d="M417.5 90V99" stroke="#bbb"/><rect x="412" y="92" width="4" height="1" fill="#999"/><rect x="412" y="94" width="4" height="1" fill="#999"/><rect x="412" y="96" width="4" height="1" fill="#999"/><rect x="412" y="98" width="4" height="1" fill="#999"/><rect x="419" y="92" width="4" height="1" fill="#999"/><rect x="419" y="94" width="4" height="1" fill="#999"/><path d="M418.5 96.5H422.5L425.5 99.5V104.5H418.5Z" fill="#fff" stroke="#767676"/><path d="M422.5 96.5V99.5H425.5" fill="none" stroke="#767676"/><rect x="420" y="99" width="1" height="1" fill="#2e6db4"/><rect x="420" y="101" width="4" height="1" fill="#2e6db4"/><path d="M410.5 125V115L413 112.5H415V125Z" fill="#fff" stroke="#777"/><path d="M411 117.5H414M411 120.5H414M411 123.5H414" stroke="#777"/><path d="M416 125V114L419 112V120" fill="none" stroke="#e9a53f" stroke-width="1.5"/><path d="M421.5 112V117" stroke="#e9a53f" stroke-width="1.5"/><path d="M419 116H422" stroke="#e9a53f"/><path d="M418.5 119.5H423.5L426.5 122.5V128.5H418.5Z" fill="#fff" stroke="#767676"/><path d="M423.5 119.5V122.5H426.5" fill="none" stroke="#767676"/><path d="M547.5 68.5H560.5L567.5 75.5V95.5H547.5Z" fill="#fff" stroke="#767676"/><path d="M560.5 68.5V75.5H567.5" fill="none" stroke="#767676"/><rect x="550.5" y="77.5" width="10" height="10" fill="#fff" stroke="#767676"/><circle cx="557.5" cy="80.5" r="1.5" fill="#eab155"/><path d="M552 86V84L554 82L556 84L557 83.5L559 85V86Z" fill="#2e6db4"/><rect x="550" y="90" width="3" height="1.2" fill="#d24726"/><rect x="554" y="90" width="7" height="1.2" fill="#d24726"/><path d="M586.5 67.5H593.5L597.5 71.5V80.5H586.5Z" fill="#fff" stroke="#767676"/><path d="M593.5 67.5V71.5H597.5" fill="none" stroke="#767676"/><rect x="588" y="71" width="4" height="1" fill="#888"/><rect x="593" y="71" width="1" height="1" fill="#888"/><rect x="595" y="71" width="1" height="1" fill="#888"/><rect x="588" y="74" width="4" height="1" fill="#888"/><rect x="593" y="74" width="1" height="1" fill="#888"/><rect x="595" y="74" width="1" height="1" fill="#888"/><rect x="588" y="77" width="4" height="1" fill="#888"/><rect x="593" y="77" width="1" height="1" fill="#888"/><rect x="595" y="77" width="1" height="1" fill="#888"/><path d="M584.5 90.5H590.5L594.5 94.5V103.5H584.5Z" fill="#f6f2f6" stroke="#a6a6a6"/><path d="M590.5 90.5V94.5H594.5" fill="none" stroke="#a6a6a6"/><rect x="596" y="90" width="3" height="9" fill="#b4b4b4"/><rect x="596" y="101" width="3" height="3" fill="#b4b4b4"/><rect x="584.5" y="112.5" width="9" height="11" fill="#fff" stroke="#767676"/><rect x="588" y="117.5" width="4" height="1.6" fill="#d24726"/><path d="M594 116.5H599.5V127.5H590.5V125" fill="#fff" stroke="#767676"/><rect x="595" y="122" width="3" height="1.4" fill="#d24726"/><path d="M745.5 68.5H758.5L765.5 75.5V95.5H745.5Z" fill="#fff" stroke="#767676"/><path d="M758.5 68.5V75.5H765.5" fill="none" stroke="#767676"/><rect x="738" y="65" width="14" height="14" fill="#f1f1f1"/><rect x="743" y="66" width="4" height="12" fill="#5aa08a"/><rect x="739" y="70" width="12" height="4" fill="#5aa08a"/><rect x="749" y="84" width="13" height="3" fill="#d9572f"/><path d="M781.5 67.5H788.5L792.5 71.5V80.5H781.5Z" fill="#fff" stroke="#767676"/><path d="M788.5 67.5V71.5H792.5" fill="none" stroke="#767676"/><rect x="783" y="71" width="4" height="1" fill="#888"/><rect x="783" y="74" width="6" height="1" fill="#888"/><rect x="790" y="74" width="1" height="1" fill="#888"/><rect x="783" y="77" width="6" height="1" fill="#888"/><rect x="790" y="77" width="1" height="1" fill="#888"/><path d="M779.5 90.5H785.5L789.5 94.5V103.5H779.5Z" fill="#f6f2f6" stroke="#a6a6a6"/><path d="M785.5 90.5V94.5H789.5" fill="none" stroke="#a6a6a6"/><rect x="791" y="90" width="3" height="9" fill="#b4b4b4"/><rect x="791" y="101" width="3" height="3" fill="#b4b4b4"/><path d="M897.5 94V68.5H916A4 4 0 0 1 920 72.5V74.5H915.5V90A4 4 0 0 1 911.5 94.5H897.5Z" fill="#fff" stroke="#777"/><path d="M915.5 68.5H916A4 4 0 0 1 920 72.5V74.5H915.5Z" fill="#777"/><path d="M892 88H909V91A3.5 3.5 0 0 0 912.5 94.7H895A3 3 0 0 1 892 91.7Z" fill="#777"/><rect x="889" y="65" width="14" height="14" fill="#f1f1f1"/><rect x="894" y="66" width="4" height="12" fill="#5aa08a"/><rect x="890" y="70" width="12" height="4" fill="#5aa08a"/><rect x="900" y="81" width="12" height="3" fill="#d9572f"/><path d="M940.5 76.5H935.5V67.5H945.5V71" fill="#fff" stroke="#666"/><rect x="937" y="70" width="3" height="1" fill="#999"/><rect x="942" y="70" width="1" height="1" fill="#999"/><rect x="937" y="72" width="2" height="1" fill="#999"/><rect x="937" y="74" width="2" height="1" fill="#999"/><path d="M940.5 79V72.5H948.5V74.5H946.5V80.5H940.5Z" fill="#fff" stroke="#666"/><rect x="942" y="75" width="3" height="1.5" fill="#d24726"/><rect x="938" y="78" width="6" height="3" fill="#666"/><path d="M933.5 90.5H939.5L943.5 94.5V103.5H933.5Z" fill="#f6f2f6" stroke="#a6a6a6"/><path d="M939.5 90.5V94.5H943.5" fill="none" stroke="#a6a6a6"/><rect x="945" y="90" width="3" height="9" fill="#b4b4b4"/><rect x="945" y="101" width="3" height="3" fill="#b4b4b4"/><path d="M137 73H142L139.5 75.5Z" fill="#666"/><path d="M58 124H63L60.5 126.5Z" fill="#666"/><path d="M333 96H338L335.5 98.5Z" fill="#666"/><path d="M399 124H404L401.5 126.5Z" fill="#666"/><path d="M499 120H504L501.5 122.5Z" fill="#666"/><path d="M515 96H520L517.5 98.5Z" fill="#666"/><path d="M336.5 148V141.5H343.5V144" fill="none" stroke="#888"/><path d="M339 143.5L342.5 147M342.5 144.5V147.5H339.5" fill="none" stroke="#666"/></svg>
<svg style="position:absolute;left:0px;top:600px;" width="1296" height="113" viewBox="0 0 1296 113"><g transform="translate(0,-600)"><path d="M161.5 704.5H157.5V694.5H161.5L163.5 696.5L165.5 694.5H169.5V696M165.5 704.5H169.5M161.5 704.5L163.5 706.5L165.5 704.5M163.5 696.5V706" fill="none" stroke="#6a6a6a" stroke-width="1.1"/><path d="M166.5 697.5L170.5 702.5M170.5 697.5L166.5 702.5" stroke="#6a6a6a" stroke-width="1.5"/><rect x="1001.5" y="694.5" width="12" height="11" fill="none" stroke="#6a6a6a"/><path d="M1007.5 694.5V707" stroke="#6a6a6a"/><path d="M1003 696.5H1006M1009 696.5H1012" stroke="#6a6a6a"/><path d="M1003 698.5H1006M1009 698.5H1012" stroke="#6a6a6a"/><path d="M1003 700.5H1006M1009 700.5H1012" stroke="#6a6a6a"/><path d="M1003 702.5H1006M1009 702.5H1012" stroke="#6a6a6a"/><rect x="1039.5" y="694.5" width="13" height="12" fill="none" stroke="#6a6a6a"/><path d="M1041.5 696.5H1050.5" stroke="#6a6a6a"/><path d="M1041.5 698.5H1050.5" stroke="#6a6a6a"/><path d="M1041.5 700.5H1050.5" stroke="#6a6a6a"/><path d="M1041.5 702.5H1050.5" stroke="#6a6a6a"/><path d="M1041.5 704.5H1050.5" stroke="#6a6a6a"/><path d="M1083.5 705.5H1077.5V694.5H1090.5V698" fill="none" stroke="#6a6a6a"/><path d="M1079.5 696.5H1088.5" stroke="#6a6a6a"/><path d="M1079.5 698.5H1086" stroke="#6a6a6a"/><path d="M1079.5 700.5H1083" stroke="#6a6a6a"/><path d="M1079.5 702.5H1082" stroke="#6a6a6a"/><circle cx="1087.5" cy="703" r="4.2" fill="#6a6a6a" stroke="#f1f1f1" stroke-width="1"/><path d="M1085 700.5Q1087 702 1086 704M1089 701.5Q1090.5 703.5 1088.5 706" stroke="#f1f1f1" stroke-width="0.9" fill="none"/></g></svg>
</body></html>
